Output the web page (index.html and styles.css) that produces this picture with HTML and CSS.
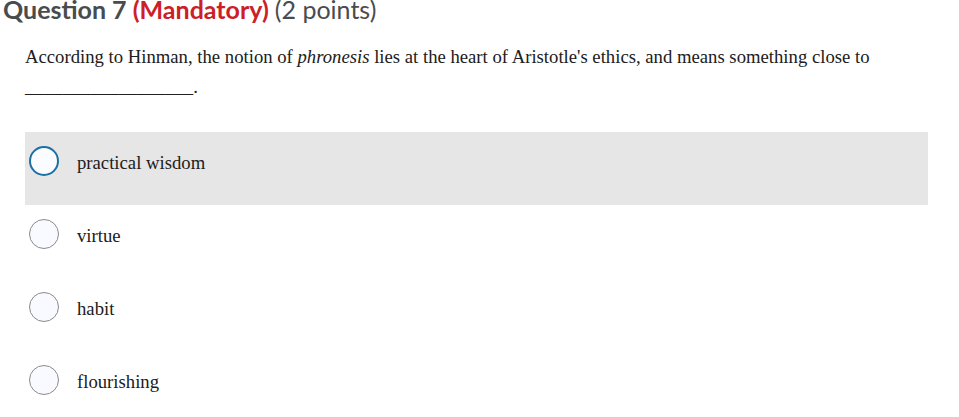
FILE: index.html
```html
<!DOCTYPE html>
<html lang="en">
<head>
<meta charset="utf-8">
<title>Question 7</title>
<link rel="stylesheet" href="styles.css">
</head>
<body>
<div class="question">
  <h2 class="q-title">Question 7 <span class="mandatory">(Mandatory)</span> <span class="points">(2 points)</span></h2>
  <p class="q-text">According to Hinman, the notion of <em>phronesis</em> lies at the heart of Aristotle's ethics, and means something close to __________________.</p>
  <div class="options">
    <label class="option selected"><span class="radio"></span><span class="label">practical wisdom</span></label>
    <label class="option"><span class="radio"></span><span class="label">virtue</span></label>
    <label class="option"><span class="radio"></span><span class="label">habit</span></label>
    <label class="option"><span class="radio"></span><span class="label">flourishing</span></label>
  </div>
</div>
</body>
</html>
```
FILE: styles.css
```css
html, body {
  margin: 0;
  padding: 0;
  background: #ffffff;
}
.question {
  width: 959px;
}
.q-title {
  margin: -6px 0 0 0;
  padding-left: 3px;
  font-family: Lato, "Liberation Sans", sans-serif;
  font-size: 25px;
  line-height: 30px;
  font-weight: 700;
  color: #494c4e;
}
.mandatory {
  color: #cd2026;
}
.points {
  font-weight: 400;
}
.q-text {
  margin: 18px 0 0 25px;
  width: 880px;
  font-family: "Liberation Serif", "Times New Roman", serif;
  font-size: 18.7px;
  line-height: 30px;
  color: #202020;
}
.options {
  margin: 30px 0 0 25px;
  width: 903px;
  display: flex;
  flex-direction: column;
}
.option {
  display: flex;
  align-items: flex-start;
  height: 73px;
  box-sizing: border-box;
  padding: 14px 0 0 4px;
}
.option.selected {
  background: #e6e6e6;
}
.radio {
  width: 30px;
  height: 30px;
  box-sizing: border-box;
  border-radius: 50%;
  border: 1px solid #8a8a8a;
  background: #f9faff;
  flex: none;
}
.selected .radio {
  border: 2px solid #1c6fa3;
  background: #fafcff;
}
.label {
  margin-left: 18px;
  margin-top: 2px;
  font-family: "Liberation Serif", "Times New Roman", serif;
  font-size: 18.7px;
  line-height: 30px;
  color: #202020;
}
```
